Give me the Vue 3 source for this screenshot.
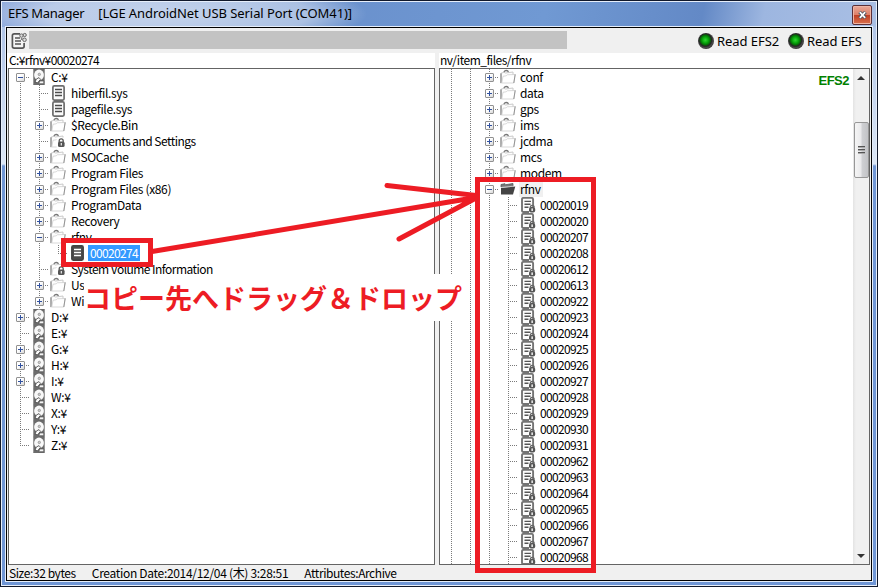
<template>
  <div class="window">
    <header class="titlebar">
      <span class="title">EFS Manager</span>
      <span class="title port">[LGE AndroidNet USB Serial Port (COM41)]</span>
      <button class="close" aria-label="Close">
        <svg width="9" height="8" viewBox="0 0 9 8">
          <path d="M1.5 1l6 6M7.5 1l-6 6" stroke="#46505e" stroke-width="3.4" />
          <path d="M1.8 1.2l5.4 5.6M7.2 1.2l-5.4 5.6" stroke="#fff" stroke-width="1.7" />
        </svg>
      </button>
    </header>

    <div class="client">
      <div class="toolbar">
        <svg class="tool-icon" width="16" height="18" viewBox="0 0 16 18">
          <path d="M9 1.8H3.2Q1.4 1.8 1.4 3.6v11q0 1.6 1.8 1.6h8q1.9 0 1.9-1.6V11" fill="#f4f4f4" stroke="#555" stroke-width="1.7" />
          <path d="M4 6h5M4 9h6M4 12h6" stroke="#555" stroke-width="1.5" />
          <circle cx="10.5" cy="3.6" r="1.7" fill="#ddd" stroke="#666" />
          <circle cx="13.7" cy="3" r="1.6" fill="#ddd" stroke="#666" />
          <circle cx="13.5" cy="7.8" r="1.8" fill="#ddd" stroke="#666" />
          <circle cx="10.7" cy="7" r="1" fill="#777" />
        </svg>
        <div class="progress"></div>
        <div v-for="name in ['Read EFS2', 'Read EFS']" :key="name" class="read">
          <i class="led"></i>{{ name }}
        </div>
      </div>

      <div class="panes">
        <section v-for="pane in panes" :key="pane.id" class="pane" :class="pane.id">
          <div class="path">{{ pane.path }}</div>
          <div class="box">
            <div class="tree">
              <div v-for="(row, i) in pane.rows" :key="i" class="row">
                <span v-for="(g, n) in row.guides" :key="n" class="cell" :class="guideClass[g]">
                  <i v-if="g === '+' || g === '-' || g === 'f'" class="expander" :class="{ open: g !== '+' }"></i>
                </span>
                <span class="icon" :class="row.icon">
                  <svg v-if="row.icon === 'drive'" width="12" height="16" viewBox="0 0 12 16">
                    <rect width="12" height="16" rx="1" fill="#6c6c6c" />
                    <path d="M.5 1v14M11.5 1v14" stroke="#999" />
                    <ellipse cx="6" cy="5.9" rx="4.9" ry="5.3" fill="#f8f8f8" />
                    <circle cx="6.3" cy="5.4" r="1.2" fill="#ccc" stroke="#888" stroke-width=".7" />
                    <path d="M2 13.4l1.2-3.2L6 8.6l1.5 1.7-2.8 3.4z" fill="#fafafa" stroke="#555" stroke-width=".9" />
                    <path d="M6.8 11.9h4v2.9H5.6z" fill="#f4f4f4" stroke="#555" stroke-width=".8" />
                  </svg>
                  <svg v-else-if="row.icon === 'file' || row.icon === 'picked'" width="13" height="16" viewBox="0 0 13 16">
                    <rect x=".9" y=".9" width="11.2" height="14.2" rx="1.3" :fill="row.icon === 'picked' ? '#4b4b4b' : '#fbfbfb'" :stroke="row.icon === 'picked' ? '#444' : '#6d6d6d'" stroke-width="1.7" />
                    <path d="M3 4.5h7M3 7.5h7M3 10.5h7" :stroke="row.icon === 'picked' ? '#fff' : '#4c4c4c'" stroke-width="1.5" />
                  </svg>
                  <svg v-else-if="row.icon === 'item'" width="15" height="16" viewBox="0 0 15 16">
                    <path d="M2.5.9h8.2q1.4 0 1.4 1.6v8M8 15H2.5Q1 15 1 13.4V2.4Q1 .9 2.5.9" fill="#fbfbfb" stroke="#747474" stroke-width="1.9" />
                    <path d="M3.5 4.4h6.5M3.5 7.3h6M3.5 10.2h4" stroke="#555" stroke-width="1.4" />
                    <path d="M9.2 10.5q0-2.2 2-2.2t2 2.2" fill="none" stroke="#666" stroke-width="1.2" />
                    <rect x="8" y="10" width="6.2" height="5.4" rx="2" fill="#555" />
                    <rect x="10.4" y="11.4" width="1.5" height="2.6" fill="#eee" />
                  </svg>
                  <svg v-else-if="row.icon === 'opened'" width="16" height="16" viewBox="0 0 16 16">
                    <path d="M1 6V3.5l4-.8 1 1 7-1.2V6" fill="#777" stroke="#555" stroke-width=".8" />
                    <path d="M1 13.5V6.7L15.3 5.6 13 13.5z" fill="#444" />
                    <path d="M1.5 6.4L14 5.2" stroke="#ddd" stroke-width=".8" />
                  </svg>
                  <svg v-else width="16" height="16" viewBox="0 0 16 16">
                    <path d="M1 14V4.2l3-.9 1.5.7 7.5-1v3" fill="#fdfdfd" stroke="#c4c4c4" stroke-width=".9" />
                    <path d="M1 14.2V4.4" stroke="#777" />
                    <path d="M1.8 14L3 7.3l3.2-.5 1-1 8-.3L13.8 14z" fill="#fff" stroke="#cfcfcf" stroke-width=".8" />
                    <path d="M15.2 5.4L13.8 14" stroke="#8a8a8a" stroke-width=".9" />
                    <path d="M3.8 2.8q2.2-2.6 4.8 0" fill="none" stroke="#777" stroke-width="1.3" />
                    <g v-if="row.icon === 'locked'">
                      <rect x="6.6" y="4.6" width="9.4" height="11.4" fill="#fff" />
                      <path d="M9.2 9V7.8q0-2 2-2t2 2V9" fill="none" stroke="#555" stroke-width="1.3" />
                      <rect x="8" y="8.6" width="6.6" height="5.4" rx="1.6" fill="#555" />
                      <rect x="10.7" y="10" width="1.2" height="2.5" fill="#eee" />
                    </g>
                  </svg>
                </span>
                <span class="label" :class="row.mark">{{ row.name }}</span>
              </div>
            </div>
            <template v-if="pane.id === 'right'">
              <strong class="badge">EFS2</strong>
              <div class="scrollbar">
                <i class="arrow up"></i>
                <div class="thumb"><i></i><i></i><i></i></div>
                <i class="arrow down"></i>
              </div>
            </template>
          </div>
        </section>
      </div>

      <footer class="status">
        <span>Size:32 bytes</span>
        <span>Creation Date:2014/12/04 (木) 3:28:51</span>
        <span>Attributes:Archive</span>
      </footer>
    </div>

    <!-- drag & drop annotation -->
    <div class="note">コピー先へドラッグ＆ドロップ</div>
    <svg class="marks" width="878" height="587" viewBox="0 0 878 587">
      <g fill="none" stroke="#ed1c24" stroke-width="5">
        <rect x="63.5" y="240.5" width="87" height="24" />
        <rect x="477.5" y="179.5" width="116" height="391" />
        <path d="M152 251.5L476 197.5M387 185.5L476 195.5M399 239L476 198" stroke-linecap="round" />
      </g>
    </svg>
  </div>
</template>

<script setup>
// guides, one char per 19px column:
// '+' '-' expander, 'f' open expander on the first row, 't' branch, 'l' last branch, '|' line
const guideClass = {
  '+': 'line branch',
  '-': 'line branch',
  f: 'below branch',
  t: 'line branch',
  l: 'above branch',
  '|': 'line',
}

function row(guides, icon, name, mark = '') {
  return { guides: guides.split(''), icon, name, mark }
}

const local = [
  row('f', 'drive', 'C:¥'),
  row('|t', 'file', 'hiberfil.sys'),
  row('|t', 'file', 'pagefile.sys'),
  row('|+', 'folder', '$Recycle.Bin'),
  row('|t', 'locked', 'Documents and Settings', 'tight'),
  row('|+', 'folder', 'MSOCache'),
  row('|+', 'folder', 'Program Files'),
  row('|+', 'folder', 'Program Files (x86)'),
  row('|+', 'folder', 'ProgramData'),
  row('|+', 'folder', 'Recovery'),
  row('|-', 'folder', 'rfnv'),
  row('||l', 'picked', '00020274', 'digits selected'),
  row('|t', 'locked', 'System Volume Information', 'tight'),
  row('|+', 'folder', 'Us'),
  row('|+', 'folder', 'Wi'),
  row('+', 'drive', 'D:¥'),
  row('t', 'drive', 'E:¥'),
  row('+', 'drive', 'G:¥'),
  row('+', 'drive', 'H:¥'),
  row('+', 'drive', 'I:¥'),
  row('t', 'drive', 'W:¥'),
  row('t', 'drive', 'X:¥'),
  row('t', 'drive', 'Y:¥'),
  row('l', 'drive', 'Z:¥'),
]

const items = [
  '00020019', '00020020', '00020207', '00020208', '00020612', '00020613', '00020922', '00020923',
  '00020924', '00020925', '00020926', '00020927', '00020928', '00020929', '00020930', '00020931',
  '00020962', '00020963', '00020964', '00020965', '00020966', '00020967', '00020968',
]

const device = [
  ...['conf', 'data', 'gps', 'ims', 'jcdma', 'mcs', 'modem'].map((n) => row('||+', 'folder', n)),
  row('||-', 'opened', 'rfnv', 'current'),
  ...items.map((n) => row('|||t', 'item', n, 'digits')),
]

const panes = [
  { id: 'left', path: 'C:¥rfnv¥00020274', rows: local },
  { id: 'right', path: 'nv/item_files/rfnv', rows: device },
]
</script>

<style>
body { margin: 0; overflow: hidden; }
</style>

<style scoped>
* { box-sizing: border-box; }
.window {
  position: relative; display: flex; flex-direction: column; width: 878px; height: 587px; padding: 1px 5px 5px;
  border: 1px solid #10182b; box-shadow: inset 0 0 0 1px #e6eefa;
  background: linear-gradient(#a9bfe5 0, #dce7f6 163px, #6f96d5 165px, #6f96d5 100%);
  font: 12px/16px "Noto Sans CJK JP", "Liberation Sans", sans-serif; color: #000;
}
.titlebar {
  display: flex; align-items: flex-start; height: 25px; margin: 0 -4px; padding: 0 4px 0 6px; flex-shrink: 0;
  background: radial-gradient(ellipse 190px 34px at 175px 12px, rgba(255,255,255,.55) 0, rgba(255,255,255,.42) 70%, transparent 100%), linear-gradient(100deg, #8faadb 0, #6a91cd 38%, #7099d3 62%, #6389c6 80%, #9db6e0 87%, #a9bfe4 100%);
}
.title { font: 13px/23px "Noto Sans", sans-serif; white-space: pre; letter-spacing: -.3px; }
.port { margin-left: 14px; letter-spacing: -.07px; }
.close { display: flex; align-items: center; justify-content: center; width: 20px; height: 20px; margin: 3px 0 0 auto; padding: 0; border: 1px solid #5b3038; border-radius: 2px; box-shadow: inset 0 0 0 1px #eeb4a4; background: linear-gradient(#e9a898 0, #dd8069 48%, #bf3d22 50%, #d8704e 100%); }

.client { display: flex; flex-direction: column; height: 554px; border: 1px solid #000; outline: 1px solid #e6eefa; background: #f0f0f0; }
.toolbar { display: flex; align-items: center; height: 25px; padding-left: 4px; flex-shrink: 0; }
.tool-icon { margin-top: 1px; flex-shrink: 0; }
.progress { width: 538px; height: 18px; margin: 0 131px 2px 2px; background: #c3c3c3; flex-shrink: 0; }
.read { display: flex; align-items: center; width: 90px; flex-shrink: 0; font: 13px/20px "Noto Sans", sans-serif; white-space: nowrap; letter-spacing: -.05px; }
.read:last-child { width: 80px; }
.led { width: 16px; height: 16px; margin-right: 3px; border-radius: 50%; background: radial-gradient(circle at 46% 44%, #32d632 0, #08a80c 24%, #056b07 40%, #252525 50%, #4a4a4a 62%, #333 72%); }

.panes { display: flex; gap: 4px; height: 512px; }
.pane { display: flex; flex-direction: column; }
.left { width: 428px; }
.right { width: 432px; }
.path { height: 15px; padding-left: 2px; background: #fff; line-height: 14px; white-space: pre; letter-spacing: -.6px; }
.right .path { padding-left: 1px; letter-spacing: -.5px; }
.box { position: relative; display: flex; height: 497px; border: 1px solid #646464; background: #fff; overflow: hidden; }
.left .box { margin-left: 1px; }
.right .box { margin-right: 1px; }
.tree { flex: 1; padding-left: 2px; }
.row { display: flex; height: 16px; }
.cell { display: flex; align-items: center; justify-content: center; width: 19px; height: 16px; background-repeat: no-repeat; }
.line, .below, .above { --v: repeating-linear-gradient(to bottom, #7a7a7a 0 1px, transparent 1px 2px); --h: repeating-linear-gradient(to right, #7a7a7a 0 1px, transparent 1px 2px); }
.line { background-image: var(--v); background-size: 1px 16px; background-position: 9px 0; }
.line.branch { background-image: var(--v), var(--h); background-size: 1px 16px, 11px 1px; background-position: 9px 0, 9px 8px; }
.below.branch { background-image: var(--v), var(--h); background-size: 1px 8px, 11px 1px; background-position: 9px 8px, 9px 8px; }
.above.branch { background-image: var(--v), var(--h); background-size: 1px 9px, 11px 1px; background-position: 9px 0, 9px 8px; }
.expander { width: 9px; height: 9px; border: 1px solid #919191; border-radius: 1px; background: linear-gradient(#31519f, #31519f) 1px 3px / 5px 1px no-repeat, linear-gradient(#31519f, #31519f) 3px 1px / 1px 5px no-repeat, linear-gradient(135deg, #fff 40%, #d8d8d8); }
.expander.open { background: linear-gradient(#31519f, #31519f) 1px 3px / 5px 1px no-repeat, linear-gradient(135deg, #fff 40%, #d8d8d8); }
.icon { display: flex; width: 19px; height: 16px; padding-left: 3px; flex-shrink: 0; }
.folder, .locked, .opened { padding-left: 1px; }
.label { height: 16px; margin-left: 1px; padding: 0 2px; white-space: pre; line-height: 15px; letter-spacing: -.35px; }
.drive + .label { padding-left: 1px; }
.right .label { padding-left: 1px; }
.tight { letter-spacing: -.54px; }
.label.digits { padding: 0 2px; letter-spacing: -.66px; }
.selected { background: #3399ff; color: #fff; }
.current { background: #f0f0f0; }
.badge { position: absolute; top: 4px; right: 20px; color: #008000; font: bold 13px/16px "Liberation Sans", sans-serif; letter-spacing: -.5px; }
.scrollbar { display: flex; flex-direction: column; align-items: center; width: 16px; padding: 7px 0 6px; background: linear-gradient(to right, #e3e3e3, #f0f0f0 3px, #f0f0f0); }
.arrow { border: 4px solid transparent; }
.up { border-top: 0; border-bottom-color: #333; }
.down { border-bottom: 0; border-top-color: #333; margin-top: auto; }
.thumb { display: flex; flex-direction: column; align-items: center; justify-content: center; gap: 1px; width: 15px; height: 56px; margin-top: 42px; border: 1px solid #979797; border-radius: 2px; background: linear-gradient(to right, #f5f5f5 0, #e9e9eb 48%, #d0d1d4 52%, #c2c3c6 100%); }
.thumb i { width: 7px; height: 2px; background: linear-gradient(#555 50%, #aaa 50%); }
.status { display: flex; gap: 16px; padding-left: 2px; white-space: pre; line-height: 15px; letter-spacing: -.42px; }
.status span:nth-child(2) { letter-spacing: -.31px; }

.note { position: absolute; left: 83px; top: 273px; width: 378px; height: 47px; background: #fff; color: #ed1c24; font: bold 27px/48px "Noto Sans CJK JP", sans-serif; white-space: nowrap; }
.marks { position: absolute; left: -1px; top: -1px; }
</style>
